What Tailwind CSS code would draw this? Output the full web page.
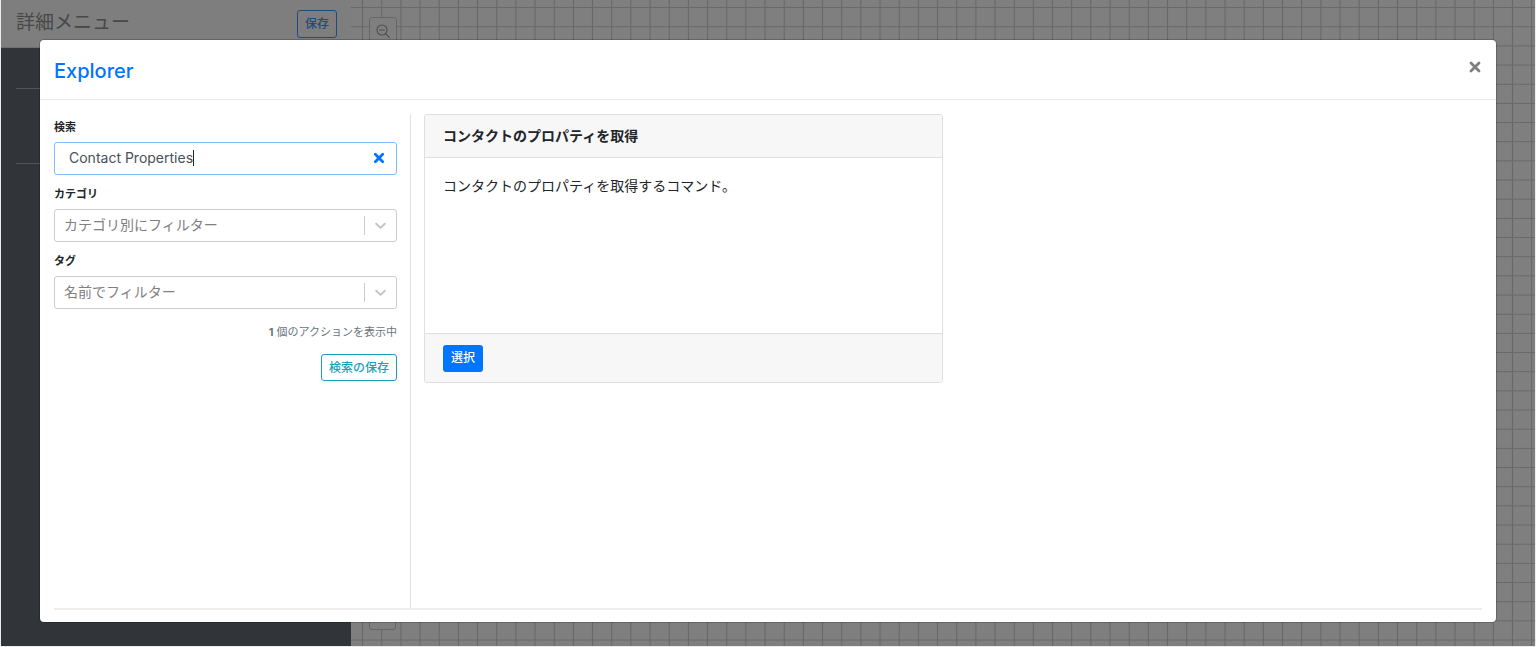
<!DOCTYPE html>
<html lang="ja">
<head>
  <meta charset="UTF-8">
  <meta name="viewport" content="width=device-width, initial-scale=1.0">
  <title>Explorer</title>
  <script src="https://cdn.jsdelivr.net/npm/@tailwindcss/browser@4"></script>
</head>
<body class="h-screen bg-[#ececec] px-px pb-px text-sm text-[#212529] font-['Inter','Noto_Sans_CJK_JP',sans-serif]">
  <div class="relative h-full flex overflow-hidden">

    <!-- Sidebar -->
    <aside class="w-[350px] shrink-0 flex flex-col bg-[#636b73]">
      <div class="h-12 shrink-0 flex items-center justify-between bg-[#fdfdfd] border-b border-[#ddd] pl-[15px] pr-[14px]">
        <h1 class="text-[19px] leading-6 pb-[2px] text-[#909090]">詳細メニュー</h1>
        <button type="button" class="h-7 px-[7px] rounded-[3px] border border-[#3f94ff] text-xs font-medium text-[#3f94ff]">保存</button>
      </div>
      <div class="flex flex-col gap-[74px] px-[15px] pt-10">
        <hr class="border-[#a4a9ad]">
        <hr class="border-[#a4a9ad]">
      </div>
    </aside>

    <!-- Canvas -->
    <main class="relative flex-1 bg-white">
      <svg class="absolute inset-0 w-full h-full" aria-hidden="true">
        <defs>
          <pattern id="grid" width="20" height="20" patternUnits="userSpaceOnUse" patternTransform="translate(1.5 -2.5) scale(.9583)">
            <path d="M10.5 0V20M0 10.5H20" fill="none" stroke="#d0d0d0" stroke-width="1.2"/>
          </pattern>
        </defs>
        <rect width="100%" height="100%" fill="url(#grid)"/>
      </svg>
      <button type="button" aria-label="Zoom out" class="absolute left-[18px] top-[17px] w-7 h-7 flex items-center justify-center rounded-[3px] border border-[#ccc] bg-white text-[#999]">
        <svg class="w-[14px] h-[14px]" viewBox="0 0 14 14" fill="none" stroke="currentColor" stroke-width="1.1" stroke-linecap="round">
          <circle cx="6" cy="6" r="5"/>
          <path d="M3.7 6H8.3M9.7 9.7L13.3 13.3"/>
        </svg>
      </button>
      <button type="button" aria-label="Fit" class="absolute left-[18px] bottom-4 w-[27px] h-7 rounded-[3px] border border-[#ccc] bg-white"></button>
    </main>

    <!-- Modal -->
    <div class="absolute inset-0 flex bg-black/50 pt-10 pb-6 px-[39px]">
      <section role="dialog" aria-labelledby="modal-title" class="flex-1 flex flex-col rounded-[4px] bg-white ring-1 ring-black/20">
        <header class="h-[60px] shrink-0 flex items-center justify-between border-b border-[#e3e9ee] px-[14px]">
          <h2 id="modal-title" class="pt-[2px] text-xl font-medium text-[#0075ff]">Explorer</h2>
          <button type="button" aria-label="Close" class="pb-[6px] pr-px text-[#7f7f7f]">
            <svg class="w-3 h-3" viewBox="0 0 12 12" stroke="currentColor" stroke-width="2.8" stroke-linecap="round">
              <path d="M2 2L10 10M10 2L2 10"/>
            </svg>
          </button>
        </header>

        <div class="flex-1 flex flex-col px-[14px] pt-[14px] pb-3">
          <div class="flex-1 flex border-b-2 border-[#eee]">
            <form class="w-1/4 border-r border-[#dee2e6] pr-[13px]">
              <label for="search" class="block h-[28px] pt-[5px] text-[11px] leading-4 font-bold">検索</label>
              <div class="relative h-[33px]">
                <input id="search" type="text" value="Contact Properties" autocomplete="off"
                  class="w-full h-full pl-[14px] pr-9 pb-[2px] rounded-[3px] border border-[#80bdff] text-sm text-[#495057] outline-none">
                <span class="absolute left-[139px] top-2 h-4 w-px bg-[#212529]"></span>
                <button type="button" aria-label="Clear" class="absolute right-3 top-[10px] text-[#0075ff]">
                  <svg class="w-3 h-3" viewBox="0 0 12 12" stroke="currentColor" stroke-width="2.8" stroke-linecap="round">
                    <path d="M2.3 2.3L9.7 9.7M9.7 2.3L2.3 9.7"/>
                  </svg>
                </button>
              </div>

              <label for="category" class="block h-[34px] pt-[11px] text-[11px] leading-4 font-bold">カテゴリ</label>
              <div class="relative h-[33px]">
                <select id="category" class="appearance-none w-full h-full pl-[9px] pr-9 pb-[2px] rounded-[3px] border border-[#ccc] bg-white text-sm text-[#808080]">
                  <option>カテゴリ別にフィルター</option>
                </select>
                <span class="pointer-events-none absolute right-0 inset-y-[7px] flex items-center border-l border-[#ccc] pl-[9px] pr-[10px]">
                  <svg class="w-[13px] h-[13px]" viewBox="0 0 13 13" fill="none" stroke="#c4c4c4" stroke-width="2" stroke-linecap="round" stroke-linejoin="round">
                    <path d="M2.2 4.8L6.5 8.9L10.8 4.8"/>
                  </svg>
                </span>
              </div>

              <label for="tag" class="block h-[34px] pt-[11px] text-[11px] leading-4 font-bold">タグ</label>
              <div class="relative h-[33px]">
                <select id="tag" class="appearance-none w-full h-full pl-[9px] pr-9 pb-[2px] rounded-[3px] border border-[#ccc] bg-white text-sm text-[#808080]">
                  <option>名前でフィルター</option>
                </select>
                <span class="pointer-events-none absolute right-0 inset-y-[7px] flex items-center border-l border-[#ccc] pl-[9px] pr-[10px]">
                  <svg class="w-[13px] h-[13px]" viewBox="0 0 13 13" fill="none" stroke="#c4c4c4" stroke-width="2" stroke-linecap="round" stroke-linejoin="round">
                    <path d="M2.2 4.8L6.5 8.9L10.8 4.8"/>
                  </svg>
                </span>
              </div>

              <div class="flex flex-col items-end gap-[14px] pt-[15px]">
                <p class="text-[11px] leading-4 text-[#6c757d]"><strong>1</strong> 個のアクションを表示中</p>
                <button type="button" class="h-[27px] px-[7px] rounded-[3px] border border-[#17a2b8] text-xs font-medium text-[#17a2b8]">検索の保存</button>
              </div>
            </form>

            <div class="flex-1 grid grid-cols-2 gap-5 content-start pl-[13px]">
              <article class="rounded-[3px] border border-[#dfdfdf] overflow-hidden">
                <h3 class="h-[43px] flex items-center px-[18px] bg-[#f7f7f7] border-b border-[#dfdfdf] font-bold">コンタクトのプロパティを取得</h3>
                <p class="h-[175px] px-[18px] pt-[18px]">コンタクトのプロパティを取得するコマンド。</p>
                <footer class="h-[49px] flex items-center px-[18px] bg-[#f7f7f7] border-t border-[#dfdfdf]">
                  <button type="button" class="h-[27px] px-2 rounded-[3px] bg-[#0075ff] text-xs font-medium text-white">選択</button>
                </footer>
              </article>
            </div>
          </div>
        </div>
      </section>
    </div>
  </div>
</body>
</html>
